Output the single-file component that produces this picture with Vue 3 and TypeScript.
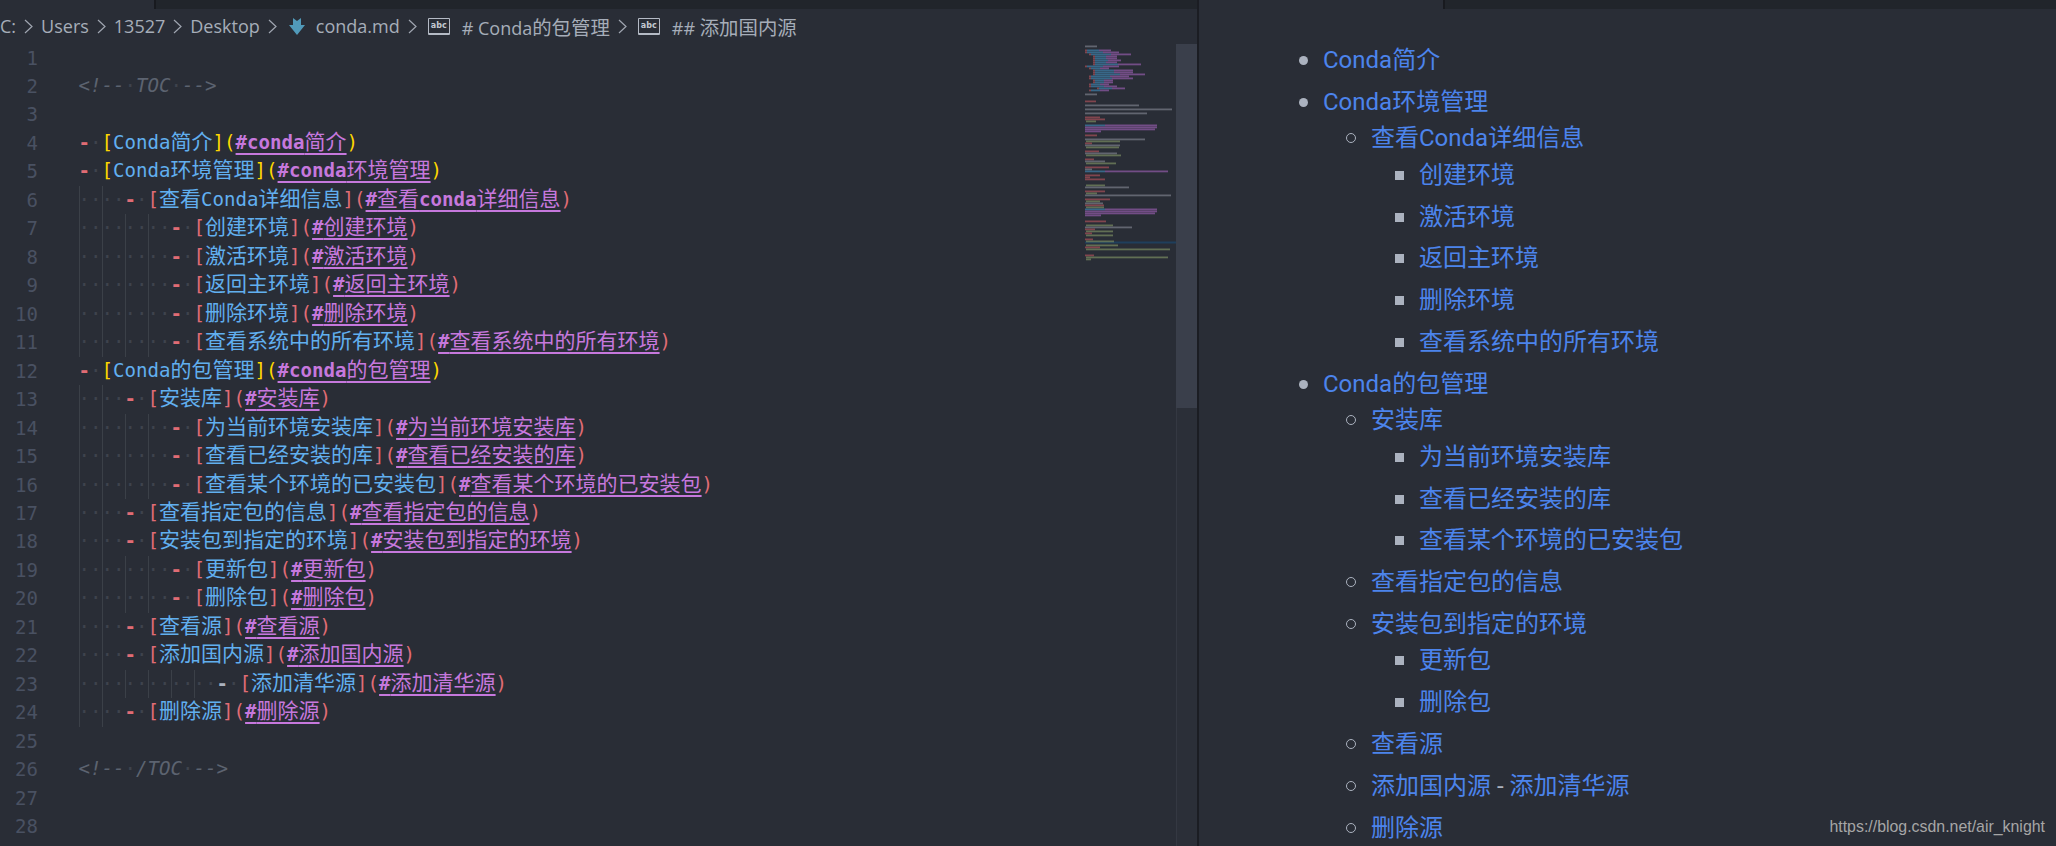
<script setup lang="ts">
interface TocLine { n: number; col: number; title: string; anchor: string; top?: boolean; dash?: string }
const toc: TocLine[] = [
  { n: 4, col: 0, title: 'Conda简介', anchor: '#conda简介', top: true },
  { n: 5, col: 0, title: 'Conda环境管理', anchor: '#conda环境管理', top: true },
  { n: 6, col: 4, title: '查看Conda详细信息', anchor: '#查看conda详细信息' },
  { n: 7, col: 8, title: '创建环境', anchor: '#创建环境' },
  { n: 8, col: 8, title: '激活环境', anchor: '#激活环境' },
  { n: 9, col: 8, title: '返回主环境', anchor: '#返回主环境' },
  { n: 10, col: 8, title: '删除环境', anchor: '#删除环境' },
  { n: 11, col: 8, title: '查看系统中的所有环境', anchor: '#查看系统中的所有环境' },
  { n: 12, col: 0, title: 'Conda的包管理', anchor: '#conda的包管理', top: true },
  { n: 13, col: 4, title: '安装库', anchor: '#安装库' },
  { n: 14, col: 8, title: '为当前环境安装库', anchor: '#为当前环境安装库' },
  { n: 15, col: 8, title: '查看已经安装的库', anchor: '#查看已经安装的库' },
  { n: 16, col: 8, title: '查看某个环境的已安装包', anchor: '#查看某个环境的已安装包' },
  { n: 17, col: 4, title: '查看指定包的信息', anchor: '#查看指定包的信息' },
  { n: 18, col: 4, title: '安装包到指定的环境', anchor: '#安装包到指定的环境' },
  { n: 19, col: 8, title: '更新包', anchor: '#更新包' },
  { n: 20, col: 8, title: '删除包', anchor: '#删除包' },
  { n: 21, col: 4, title: '查看源', anchor: '#查看源' },
  { n: 22, col: 4, title: '添加国内源', anchor: '#添加国内源' },
  { n: 23, col: 12, title: '添加清华源', anchor: '#添加清华源', dash: 'plain' },
  { n: 24, col: 4, title: '删除源', anchor: '#删除源' },
]

const lineNumbers: number[] = Array.from({ length: 28 }, (_, i) => i + 1)

function byNumber(n: number): TocLine | undefined {
  return toc.find((t) => t.n === n)
}

interface Run { text: string; zh: boolean }
function runs(text: string): Run[] {
  return (text.match(/[\u4e00-\u9fff]+|[^\u4e00-\u9fff]+/g) ?? []).map((t) => ({
    text: t,
    zh: /[\u4e00-\u9fff]/.test(t),
  }))
}

function cols(text: string): number {
  return runs(text).reduce((s, r) => s + (r.zh ? r.text.length * 2 : r.text.length), 0)
}

const RED = '#a34f58'
const GRAY = '#777c86'
const GREEN = '#77895f'
const BLUE = '#3f7ea8'
const PURPLE = '#8f5aa5'
type Bar = [number, number, number, string]

const tocBars: Bar[] = toc.flatMap((t): Bar[] => {
  const y = 43 + (t.n - 1) * 2
  const x = 1085 + t.col
  const tw = cols(t.title) + 3
  return [
    [y, x, 2, RED],
    [y, x + 2, tw, BLUE],
    [y, x + 2 + tw, cols(t.anchor) + 2, PURPLE],
  ]
})

const restBars: Bar[] = [
  [45, 1085, 12, GRAY], [93, 1085, 12, GRAY],
  [100, 1085, 11, RED], [104, 1085, 54, GRAY], [108, 1085, 87, GRAY], [112, 1085, 62, GRAY],
  [116, 1085, 15, RED], [118, 1085, 20, RED], [120, 1086, 10, GREEN],
  [124, 1085, 20, BLUE], [124, 1105, 52, PURPLE], [126, 1085, 72, PURPLE], [128, 1085, 70, PURPLE], [130, 1085, 16, PURPLE],
  [134, 1085, 12, RED], [138, 1085, 60, GRAY], [140, 1086, 34, GREEN], [142, 1085, 7, RED], [144, 1085, 35, GRAY], [146, 1086, 33, GREEN],
  [150, 1085, 14, RED], [152, 1085, 32, GRAY], [154, 1086, 35, GREEN],
  [158, 1085, 9, RED], [160, 1085, 20, GRAY], [162, 1086, 30, GREEN],
  [166, 1085, 24, RED], [168, 1085, 7, GRAY], [170, 1085, 20, BLUE], [170, 1105, 63, PURPLE],
  [174, 1085, 15, RED], [176, 1085, 5, RED], [178, 1085, 20, RED],
  [184, 1086, 19, GREEN], [186, 1085, 44, GRAY],
  [190, 1085, 20, RED], [192, 1086, 11, GREEN], [194, 1085, 86, GRAY],
  [198, 1085, 25, RED], [200, 1086, 14, GREEN], [202, 1085, 18, GRAY], [204, 1085, 19, RED], [206, 1086, 18, GREEN],
  [208, 1085, 20, BLUE], [208, 1105, 52, PURPLE], [210, 1085, 72, PURPLE], [212, 1085, 70, PURPLE], [214, 1085, 16, PURPLE],
  [220, 1085, 21, RED], [224, 1086, 27, GREEN], [226, 1085, 47, GRAY], [228, 1085, 10, RED], [230, 1086, 27, GREEN], [232, 1085, 7, RED], [234, 1086, 27, GREEN],
  [238, 1085, 8, RED], [240, 1086, 28, GREEN], [244, 1086, 32, GREEN], [246, 1085, 15, RED], [248, 1086, 84, GREEN],
  [254, 1085, 9, RED], [256, 1086, 82, GREEN], [258, 1086, 5, GREEN],
]
const bars: Bar[] = [...tocBars, ...restBars]

interface Crumb { text: string; zh?: string; icon?: 'md' | 'abc' }
const crumbs: Crumb[] = [
  { text: 'C:' },
  { text: 'Users' },
  { text: '13527' },
  { text: 'Desktop' },
  { text: 'conda.md', icon: 'md' },
  { text: '# Conda', zh: '的包管理', icon: 'abc' },
  { text: '## ', zh: '添加国内源', icon: 'abc' },
]
</script>

<template>
  <div class="root">
    <section class="left">
      <div class="strip"><div class="tab left-tab"></div></div>
      <nav class="crumbs">
        <template v-for="(c, i) in crumbs" :key="i">
          <svg v-if="i > 0" class="chev" width="9" height="15" viewBox="0 0 9 15">
            <polyline points="1,1 8,7.5 1,14" fill="none" stroke="#a0a6b1" stroke-width="1.2" />
          </svg>
          <svg v-if="c.icon === 'md'" class="md" width="16" height="17" viewBox="0 0 16 17">
            <path d="M4 0 L8 3 L12 0 V7 H16 L8 17 L0 7 H4 Z" fill="#519aba" />
          </svg>
          <span v-if="c.icon === 'abc'" class="abc">abc</span>
          <span class="crumb">{{ c.text }}<span v-if="c.zh" class="crumb-zh">{{ c.zh }}</span></span>
        </template>
      </nav>
      <div class="editor">
        <div class="gutter">
          <div v-for="n in lineNumbers" :key="n" class="num">{{ n }}</div>
        </div>
        <div class="code">
          <div v-for="n in lineNumbers" :key="n" class="line">
            <template v-if="n === 2">
              <span class="comment">&lt;!--<span class="ws">·</span>TOC<span class="ws">·</span>--&gt;</span>
            </template>
            <template v-else-if="n === 26">
              <span class="comment">&lt;!--<span class="ws">·</span>/TOC<span class="ws">·</span>--&gt;</span>
            </template>
            <template v-else-if="byNumber(n)">
              <span v-for="g in byNumber(n)!.col / 2" :key="g" class="guide">··</span>
              <span :class="byNumber(n)!.dash === 'plain' ? 'dash-plain' : 'dash'">-</span><span class="ws">·</span>
              <span :class="byNumber(n)!.top ? 'br-top' : 'br'">[</span>
              <span class="title"><span v-for="(r, i) in runs(byNumber(n)!.title)" :key="i" :class="{ zh: r.zh }">{{ r.text }}</span></span>
              <span :class="byNumber(n)!.top ? 'br-top' : 'br'">](</span>
              <span class="anchor"><span v-for="(r, i) in runs(byNumber(n)!.anchor)" :key="i" :class="r.zh ? 'zh' : 'anchor-latin'">{{ r.text }}</span></span>
              <span :class="byNumber(n)!.top ? 'br-top' : 'br'">)</span>
            </template>
          </div>
        </div>
        <svg class="minimap" width="91" height="802" viewBox="1085 43.5 91 802">
          <rect x="1085" y="241" width="91" height="2" fill="#1f3f5c" />
          <rect v-for="(b, i) in bars" :key="i" :x="b[1]" :y="b[0]" :width="b[2]" height="1.8" :fill="b[3]" opacity="0.72" />
        </svg>
        <div class="scrolltrack"><div class="slider"></div></div>
      </div>
    </section>

    <section class="right">
      <div class="strip"><div class="tab right-tab"></div></div>
      <div class="preview">
        <ul class="l1">
          <li><a href="#a">Conda简介</a></li>
          <li>
            <a href="#a">Conda环境管理</a>
            <ul class="l2">
              <li>
                <a href="#a">查看Conda详细信息</a>
                <ul class="l3">
                  <li><a href="#a">创建环境</a></li>
                  <li><a href="#a">激活环境</a></li>
                  <li><a href="#a">返回主环境</a></li>
                  <li><a href="#a">删除环境</a></li>
                  <li><a href="#a">查看系统中的所有环境</a></li>
                </ul>
              </li>
            </ul>
          </li>
          <li>
            <a href="#a">Conda的包管理</a>
            <ul class="l2">
              <li>
                <a href="#a">安装库</a>
                <ul class="l3">
                  <li><a href="#a">为当前环境安装库</a></li>
                  <li><a href="#a">查看已经安装的库</a></li>
                  <li><a href="#a">查看某个环境的已安装包</a></li>
                </ul>
              </li>
              <li><a href="#a">查看指定包的信息</a></li>
              <li>
                <a href="#a">安装包到指定的环境</a>
                <ul class="l3">
                  <li><a href="#a">更新包</a></li>
                  <li><a href="#a">删除包</a></li>
                </ul>
              </li>
              <li><a href="#a">查看源</a></li>
              <li><a href="#a">添加国内源</a> - <a href="#a">添加清华源</a></li>
              <li><a href="#a">删除源</a></li>
            </ul>
          </li>
        </ul>
      </div>
    </section>
    <div class="watermark">https://blog.csdn.net/air_knight</div>
  </div>
</template>

<style scoped>
.root {
  position: relative;
  display: flex;
  width: 2056px;
  height: 846px;
  overflow: hidden;
  background: #292d36;
}
.left {
  width: 1197px;
  flex: none;
  display: flex;
  flex-direction: column;
  border-right: 2px solid #1b1d23;
}
.right {
  flex: 1;
  display: flex;
  flex-direction: column;
  min-width: 0;
}
.strip {
  height: 9px;
  flex: none;
  background: #21252b;
  display: flex;
}
.tab {
  height: 100%;
  background: #292d36;
  border-right: 2px solid #181a1f;
}
.left-tab { width: 154px; }
.right-tab { width: 244px; }
.crumbs {
  height: 34.5px;
  flex: none;
  display: flex;
  align-items: center;
  font-family: "Open Sans", "Noto Sans CJK SC", sans-serif;
  font-size: 18px;
  color: #a6adb9;
  white-space: pre;
}
.crumb-zh {
  font-size: 19.4px;
}
.chev {
  margin: 0 8px;
  flex: none;
}
.md {
  margin: 0 11px 0 4px;
  flex: none;
}
.abc {
  box-sizing: border-box;
  width: 22px;
  height: 17px;
  margin: 0 12px 0 3px;
  flex: none;
  border: 1.5px solid #b4bac5;
  border-bottom-width: 2px;
  border-radius: 1px;
  font-family: "DejaVu Sans", sans-serif;
  font-size: 8px;
  font-weight: 700;
  line-height: 13px;
  text-align: center;
  color: #c4c9d2;
}
.editor {
  flex: 1;
  display: flex;
  min-height: 0;
  overflow: hidden;
}
.gutter {
  width: 78.6px;
  flex: none;
  box-sizing: border-box;
  padding-right: 40.6px;
  text-align: right;
  color: #495162;
  font-family: "DejaVu Sans Mono", monospace;
  font-size: 19px;
}
.num {
  height: 28.48px;
  line-height: 28.48px;
}
.code {
  flex: 1;
  min-width: 0;
  font-family: "DejaVu Sans Mono", "Noto Sans CJK SC", monospace;
  font-size: 19.1px;
}
.line {
  height: 28.48px;
  line-height: 28.48px;
  white-space: nowrap;
  display: flex;
}
.guide {
  display: inline-block;
  width: 23px;
  height: 28.48px;
  flex: none;
  box-sizing: border-box;
  box-shadow: inset 1px 0 0 #3b4048;
  color: #3e434d;
}
.ws { color: #3e434d; font-style: normal; }
.comment {
  color: #5c6370;
  font-style: italic;
}
.dash { color: #e06c75; font-weight: 700; }
.dash-plain { color: #abb2bf; font-weight: 700; }
.br { color: #e06c75; }
.br-top { color: #ffd700; }
.title { color: #61afef; }
.anchor {
  color: #c678dd;
  text-decoration: underline 2px #c678dd;
  text-underline-offset: 4px;
  text-decoration-skip-ink: none;
}
.anchor-latin { font-weight: 700; }
.zh {
  font-family: "Noto Sans CJK SC", sans-serif;
  font-size: 21px;
  font-weight: 400;
  line-height: 1;
}
.minimap {
  width: 91px;
  flex: none;
}
.scrolltrack {
  width: 21px;
  flex: none;
  background: #2b2f38;
  border-left: 1px solid #343842;
  box-sizing: border-box;
}
.slider {
  height: 364px;
  margin-left: -1px;
  background: #3a3f4b;
}
.preview {
  flex: 1;
  min-height: 0;
  overflow: hidden;
  padding-top: 33px;
  font-family: Roboto, "Noto Sans CJK SC", sans-serif;
  font-size: 24px;
  line-height: 36.5px;
  color: #abb2bf;
}
.preview ul {
  margin: 0;
  padding-left: 48px;
  list-style: none;
}
.preview .l1 { padding-left: 124px; }
.preview li {
  position: relative;
}
.preview li + li { margin-top: 5.3px; }
.preview li::before {
  content: "";
  position: absolute;
  box-sizing: border-box;
}
.preview .l1 > li::before {
  left: -24px;
  top: 14px;
  width: 9px;
  height: 9px;
  border-radius: 50%;
  background: #abb2bf;
}
.preview .l2 > li::before {
  left: -25px;
  top: 13px;
  width: 10px;
  height: 10px;
  border-radius: 50%;
  border: 1px solid #abb2bf;
}
.preview .l3 > li::before {
  left: -24px;
  top: 14px;
  width: 9px;
  height: 9px;
  background: #abb2bf;
}
.preview a {
  color: #4c84ec;
  text-decoration: none;
}
.watermark {
  position: absolute;
  right: 11px;
  bottom: 9px;
  font-family: "Liberation Sans", Arial, sans-serif;
  font-size: 15.9px;
  line-height: 20px;
  color: #a6a6a6;
}
</style>
